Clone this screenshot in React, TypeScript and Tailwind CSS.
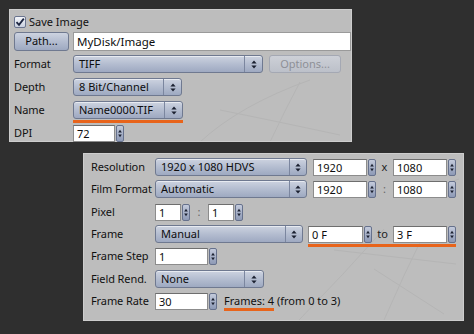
import type { ReactNode } from "react";

const FONT = "font-['Noto_Sans',sans-serif]";

function UpDown() {
  return (
    <svg width="6" height="9" viewBox="0 0 6 9">
      <path d="M3 0.5 L5.6 3.6 L0.4 3.6 Z" fill="#1b2030" />
      <path d="M3 8.5 L5.6 5.4 L0.4 5.4 Z" fill="#1b2030" />
    </svg>
  );
}

function Dropdown({
  value,
  width,
  arrow = 18,
}: {
  value: string;
  width: number;
  arrow?: number;
}) {
  return (
    <div
      className="flex h-[18px] shrink-0 rounded-[3px] border border-[#6f7990] bg-linear-to-b from-[#cdd3e0] via-[#b4bdd0] to-[#9ea9c1] shadow-[inset_0_1px_0_rgba(255,255,255,0.55)]"
      style={{ width }}
    >
      <span className="flex-1 pl-[5px] text-[11px] leading-[16px] text-[#0d0d0d]">
        {value}
      </span>
      <span
        className="flex items-center justify-center border-l border-[#7b869f]"
        style={{ width: arrow }}
      >
        <UpDown />
      </span>
    </div>
  );
}

function NumField({ value, width }: { value: string; width: number }) {
  return (
    <div className="flex h-[17px] shrink-0 items-stretch" style={{ width }}>
      <div className="flex-1 border border-[#8c8c8c] border-t-[#6e6e6e] bg-white pl-[3px] text-[11px] leading-[15px] text-[#0d0d0d]">
        {value}
      </div>
      <div className="ml-px flex w-[8px] items-center justify-center rounded-[2px] border border-[#66718c] bg-linear-to-b from-[#c3cadb] to-[#8e9ab6]">
        <svg width="4" height="9" viewBox="0 0 4 9">
          <path d="M2 0.8 L3.8 3.6 L0.2 3.6 Z" fill="#1b2030" />
          <path d="M2 8.2 L3.8 5.4 L0.2 5.4 Z" fill="#1b2030" />
        </svg>
      </div>
    </div>
  );
}

function Row({
  label,
  labelWidth,
  className = "",
  children,
}: {
  label?: string;
  labelWidth: number;
  className?: string;
  children: ReactNode;
}) {
  return (
    <div className={`relative flex h-[18px] items-center ${className}`}>
      <span
        className="shrink-0 text-[11px] tracking-[-0.1px] text-[#111]"
        style={{ width: labelWidth }}
      >
        {label}
      </span>
      {children}
    </div>
  );
}

function Underline({ children }: { children: ReactNode }) {
  return (
    <div className="relative flex items-center">
      {children}
      <div className="absolute -bottom-[4px] left-0 right-0 h-[3px] bg-[#e8641b]" />
    </div>
  );
}

// faint scratch lines in the panel backdrop
function Texture({ lines }: { lines: string[] }) {
  return (
    <svg className="pointer-events-none absolute inset-0 h-full w-full">
      {lines.map((d, i) => (
        <path key={i} d={d} fill="none" stroke="#b5b5b5" strokeWidth="1" />
      ))}
    </svg>
  );
}

export default function App() {
  return (
    <div
      className={`${FONT} flex h-[334px] w-[474px] flex-col overflow-hidden bg-[#2f2f2f]`}
    >
      {/* save image panel */}
      <div className="relative ml-[9px] mt-[9px] h-[133px] w-[343px] border border-[#cdcdcd] bg-[#bdbdbd] pl-[4px] pt-[6px]">
        <Texture
          lines={[
            "M190 132 Q230 95 300 70",
            "M210 100 Q260 110 330 125",
            "M260 132 Q275 100 290 72",
          ]}
        />
        <div className="relative flex h-[12px] items-center">
          <div className="flex h-[12px] w-[12px] items-center justify-center rounded-[2px] border border-[#6b7590] bg-linear-to-b from-[#f4f6fa] to-[#c9d0df]">
            <svg width="10" height="10" viewBox="0 0 10 10">
              <path
                d="M1.5 5.2 L4 7.8 L8.8 1.6"
                fill="none"
                stroke="#1c2540"
                strokeWidth="1.8"
              />
            </svg>
          </div>
          <span className="ml-[3px] text-[11px] text-[#111]">Save Image</span>
        </div>

        <div className="relative mt-[4px] flex h-[19px] items-center">
          <div className="flex h-[19px] w-[55px] items-center justify-center rounded-[3px] border border-[#6f7990] bg-linear-to-b from-[#cdd3e0] via-[#b4bdd0] to-[#9ea9c1] text-[11px] text-[#0d0d0d]">
            Path...
          </div>
          <div className="ml-[4px] h-[19px] w-[278px] border border-[#9a9a9a] bg-white pl-[3px] text-[11.5px] leading-[17px] text-[#0d0d0d]">
            MyDisk/Image
          </div>
        </div>

        <Row label="Format" labelWidth={59} className="mt-[4px]">
          <Dropdown value="TIFF" width={190} />
          <div className="ml-[6px] flex h-[18px] w-[72px] items-center justify-center rounded-[3px] border border-[#a4a8b3] bg-linear-to-b from-[#cdd0d7] to-[#bcc0c9] text-[11px] text-[#8e9097]">
            Options...
          </div>
        </Row>

        <Row label="Depth" labelWidth={59} className="mt-[5px]">
          <Dropdown value="8 Bit/Channel" width={109} />
        </Row>

        <Row label="Name" labelWidth={59} className="mt-[5px]">
          <Underline>
            <Dropdown value="Name0000.TIF" width={110} />
          </Underline>
        </Row>

        <Row label="DPI" labelWidth={59} className="mt-[5px]">
          <NumField value="72" width={51} />
        </Row>
      </div>

      {/* render settings panel */}
      <div className="relative ml-[83px] mt-[11px] h-[168px] w-[381px] border border-[#cdcdcd] bg-[#bdbdbd] pl-[7px] pt-[4px]">
        <Texture
          lines={[
            "M215 166 Q260 120 300 75",
            "M250 96 L372 110",
            "M300 166 Q320 120 340 80",
            "M330 40 L375 25",
            "M290 115 L360 160",
          ]}
        />
        <Row label="Resolution" labelWidth={64}>
          <Dropdown value="1920 x 1080 HDVS" width={152} arrow={17} />
          <div className="ml-[6px]">
            <NumField value="1920" width={63} />
          </div>
          <span className="w-[17px] text-center text-[11px] text-[#222]">x</span>
          <NumField value="1080" width={63} />
        </Row>

        <Row label="Film Format" labelWidth={64} className="mt-[4px]">
          <Dropdown value="Automatic" width={152} arrow={17} />
          <div className="ml-[6px]">
            <NumField value="1920" width={63} />
          </div>
          <span className="w-[17px] text-center text-[11px] text-[#666]">:</span>
          <NumField value="1080" width={63} />
        </Row>

        <Row label="Pixel" labelWidth={64} className="mt-[5px]">
          <NumField value="1" width={35} />
          <span className="w-[18px] text-center text-[11px] text-[#666]">:</span>
          <NumField value="1" width={35} />
        </Row>

        <Row label="Frame" labelWidth={64} className="mt-[4px]">
          <Dropdown value="Manual" width={148} arrow={17} />
          <div className="ml-[5px]">
            <Underline>
              <NumField value="0 F" width={64} />
              <span className="w-[21px] text-center text-[11px] text-[#222]">to</span>
              <NumField value="3 F" width={63} />
            </Underline>
          </div>
        </Row>

        <Row label="Frame Step" labelWidth={64} className="mt-[4px]">
          <NumField value="1" width={62} />
        </Row>

        <Row label="Field Rend." labelWidth={64} className="mt-[5px]">
          <Dropdown value="None" width={109} arrow={19} />
        </Row>

        <Row label="Frame Rate" labelWidth={64} className="mt-[4px]">
          <NumField value="30" width={62} />
          <span className="ml-[7px] text-[11px] text-[#111]">
            <span className="relative">
              Frames: 4
              <span className="absolute -bottom-[3px] left-0 right-0 h-[3px] bg-[#e8641b]" />
            </span>{" "}
            (from 0 to 3)
          </span>
        </Row>
      </div>
    </div>
  );
}
